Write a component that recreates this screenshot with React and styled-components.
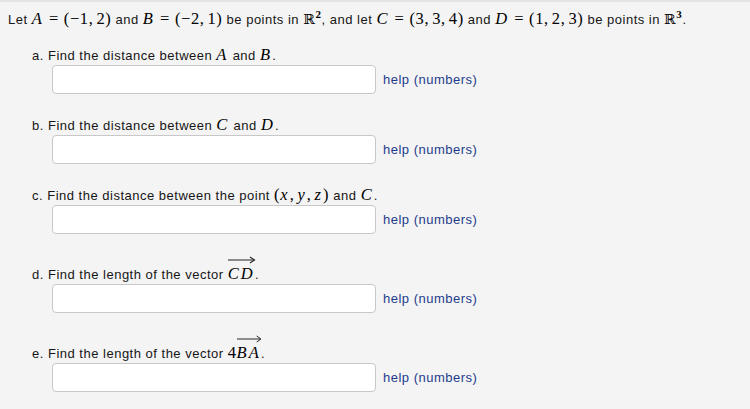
import React from 'react';
import styled, { createGlobalStyle } from 'styled-components';

const GlobalStyle = createGlobalStyle`
  html, body {
    margin: 0;
    padding: 0;
    background: #f4f4f4;
  }
`;

const Page = styled.div`
  min-height: 100vh;
  box-sizing: border-box;
  border-top: 2px solid #e4e4e4;
  background: #f4f4f4;
  padding: 8px 8px 0 8px;
  font-family: "Liberation Sans", Arial, sans-serif;
  font-size: 13px;
  letter-spacing: 0.5px;
  color: #161616;
`;

const Intro = styled.div`
  line-height: 20px;
  white-space: nowrap;
  margin-bottom: 16px;
`;

const Parts = styled.div`
  padding-left: 24px;
`;

const Part = styled.div`
  margin-bottom: 22px;
`;

const Label = styled.div`
  line-height: 19px;
  padding-top: ${p => (p.$tall ? '9px' : '0')};
  white-space: nowrap;
`;

const AnswerRow = styled.div`
  display: flex;
  align-items: center;
  gap: 7px;
  padding-left: 20px;
`;

const AnswerBox = styled.input`
  box-sizing: border-box;
  width: 324px;
  height: 29px;
  margin: 0;
  border: 1px solid #c8c8c8;
  border-radius: 4px;
  background: #fff;
  outline: none;
`;

const HelpLink = styled.a`
  color: #1d3c8c;
  text-decoration: none;
  font-size: 13px;
  cursor: pointer;
`;

const Math = styled.span`
  font-family: "Liberation Serif", "DejaVu Serif", serif;
  font-size: 16.5px;
  line-height: 0;
  color: #000;
  letter-spacing: 0.6px;
`;

const V = styled.i`
  font-style: italic;
  padding-right: 1.5px;
`;

const Op = styled.span`
  margin: 0 ${p => p.$space || '4px'};
`;

const Comma = styled.span`
  margin-right: 3px;
`;

const Field = styled.span`
  font-family: "DejaVu Serif", serif;
  font-size: 14px;
`;

const Sup = styled.sup`
  font-size: 11px;
  line-height: 0;
  font-weight: bold;
  font-family: "Liberation Serif", serif;
`;

const Vec = styled.span`
  position: relative;
`;

const Arrow = styled.svg`
  position: absolute;
  left: 0;
  top: -8px;
  width: 100%;
  height: 8px;
  overflow: visible;
`;

function Tuple({ items }) {
  return (
    <span>
      (
      {items.map((n, i) => (
        <React.Fragment key={i}>
          {n}
          {i < items.length - 1 && <Comma>,</Comma>}
        </React.Fragment>
      ))}
      )
    </span>
  );
}

function Point({ name, items }) {
  return (
    <Math>
      <V>{name}</V>
      <Op $space="5px">=</Op>
      <Tuple items={items} />
    </Math>
  );
}

function Vector({ children }) {
  return (
    <Vec>
      <Arrow viewBox="0 0 26 8" preserveAspectRatio="none">
        <line x1="0" y1="4" x2="25" y2="4" stroke="#222" strokeWidth="1" />
        <path d="M21 1 L25.5 4 L21 7" fill="none" stroke="#222" strokeWidth="1" />
      </Arrow>
      {children}
    </Vec>
  );
}

const parts = [
  {
    key: 'a',
    label: (
      <>
        a. Find the distance between <Math><V>A</V></Math> and <Math><V>B</V></Math>.
      </>
    ),
  },
  {
    key: 'b',
    label: (
      <>
        b. Find the distance between <Math><V>C</V></Math> and <Math><V>D</V></Math>.
      </>
    ),
  },
  {
    key: 'c',
    label: (
      <>
        c. Find the distance between the point{' '}
        <Math>
          (<V>x</V><Comma>,</Comma><V>y</V><Comma>,</Comma><V>z</V>)
        </Math>{' '}
        and <Math><V>C</V></Math>.
      </>
    ),
  },
  {
    key: 'd',
    tall: true,
    label: (
      <>
        d. Find the length of the vector{' '}
        <Math>
          <Vector><V>C</V><V>D</V></Vector>
        </Math>
        .
      </>
    ),
  },
  {
    key: 'e',
    tall: true,
    label: (
      <>
        e. Find the length of the vector{' '}
        <Math>
          4<Vector><V>B</V><V>A</V></Vector>
        </Math>
        .
      </>
    ),
  },
];

export default function App() {
  return (
    <>
      <GlobalStyle />
      <Page>
        <Intro>
          Let <Point name="A" items={['−1', '2']} /> and{' '}
          <Point name="B" items={['−2', '1']} /> be points in{' '}
          <Math><Field>ℝ</Field><Sup>2</Sup></Math>, and let{' '}
          <Point name="C" items={['3', '3', '4']} /> and{' '}
          <Point name="D" items={['1', '2', '3']} /> be points in{' '}
          <Math><Field>ℝ</Field><Sup>3</Sup></Math>.
        </Intro>
        <Parts>
          {parts.map(p => (
            <Part key={p.key}>
              <Label $tall={p.tall}>{p.label}</Label>
              <AnswerRow>
                <AnswerBox type="text" />
                <HelpLink>help (numbers)</HelpLink>
              </AnswerRow>
            </Part>
          ))}
        </Parts>
      </Page>
    </>
  );
}
